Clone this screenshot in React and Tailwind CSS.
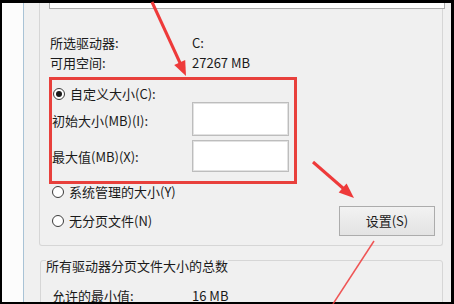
import React from "react";

function Radio({ checked }) {
  return (
    <span className="w-[12px] h-[12px] rounded-full border border-[#3c3c3c] bg-white flex items-center justify-center shrink-0">
      {checked && <span className="w-[6px] h-[6px] rounded-full bg-[#1a1a1a]" />}
    </span>
  );
}

export default function App() {
  return (
    <div className="relative w-[454px] h-[304px] bg-black pt-[3px] pl-[2px] pr-[3px] pb-[2px] overflow-hidden text-[13px] leading-[20px] text-[#1a1a1a] font-['Noto_Sans_CJK_SC','Noto_Sans',sans-serif]">
      <div className="flex h-full">
        <div className="w-[21px] bg-[#fcfcfc]" />
        <div className="w-px bg-[#a9c3d6]" />
        <div className="flex-1 bg-[#f0f0f0] pl-[15px] pr-[8px] overflow-hidden">
          {/* group 1 */}
          <div className="h-[243px] border-x border-b border-[#d6d6d6] rounded-b-[3px] flex flex-col">
            <div className="ml-[9px] mr-[-3px] h-[6px] border-x border-b border-[#adadad] bg-white" />
            <div className="mt-[24px] ml-[10px] flex flex-col">
              <div className="flex h-[20px] items-center">
                <span className="w-[142px]">所选驱动器:</span>
                <span>C:</span>
              </div>
              <div className="flex h-[20px] items-center">
                <span className="w-[142px]">可用空间:</span>
                <span>27267 MB</span>
              </div>
            </div>
            <div className="mt-[4px] ml-[9px] w-[248px] h-[107px] border-[3px] border-[#e8403c] flex flex-col">
              <div className="mt-[4px] h-[20px] flex items-center gap-[5px] ml-[1px]">
                <Radio checked />
                <span>自定义大小(C):</span>
              </div>
              <div className="mt-[-2px] flex items-center">
                <span className="w-[140px] pt-[3px]">初始大小(MB)(I):</span>
                <div className="w-[97px] h-[34px] bg-white border border-[#bdbdbd] shadow-[inset_0_0_0_1px_#e2e2e2]" />
              </div>
              <div className="mt-[4px] flex items-center">
                <span className="w-[140px] pt-[1px]">最大值(MB)(X):</span>
                <div className="w-[97px] h-[32px] bg-white border border-[#bdbdbd] shadow-[inset_0_0_0_1px_#e2e2e2]" />
              </div>
            </div>
            <div className="ml-[12px] h-[16px] flex items-center gap-[5px]">
              <Radio />
              <span>系统管理的大小(Y)</span>
            </div>
            <div className="mt-[6px] ml-[12px] mr-[7px] h-[30px] flex items-center justify-between">
              <div className="flex items-center gap-[5px]">
                <Radio />
                <span>无分页文件(N)</span>
              </div>
              <button className="w-[96px] h-[30px] border border-[#acacac] bg-gradient-to-b from-[#f2f2f2] to-[#e3e3e3] text-[13px] text-[#1a1a1a] flex items-center justify-center">
                设置(S)
              </button>
            </div>
          </div>
          {/* group 2 */}
          <div className="mt-[14px] ml-[1px] h-[60px] border border-[#d6d6d6] rounded-[3px] flex flex-col">
            <span className="mt-[-5px] ml-[5px] self-start bg-[#f0f0f0] leading-[20px]">
              所有驱动器分页文件大小的总数
            </span>
            <div className="mt-[10px] ml-[11px] flex h-[20px] items-center">
              <span className="w-[140px]">允许的最小值:</span>
              <span>16 MB</span>
            </div>
          </div>
        </div>
      </div>
      <svg className="absolute inset-0 pointer-events-none" width="454" height="304" viewBox="0 0 454 304">
        <line x1="152" y1="2" x2="181" y2="65" stroke="#ee3a3a" strokeWidth="3" />
        <polygon points="186,76 174.2,64.9 185.2,59.9" fill="#ee3a3a" />
        <line x1="313" y1="162" x2="344" y2="189" stroke="#ee3a3a" strokeWidth="3" />
        <polygon points="354,198 338.7,192.6 346.6,183.6" fill="#ee3a3a" />
        <line x1="374" y1="241" x2="333" y2="304" stroke="#ee3a3a" strokeOpacity="0.85" strokeWidth="1.5" />
      </svg>
    </div>
  );
}
